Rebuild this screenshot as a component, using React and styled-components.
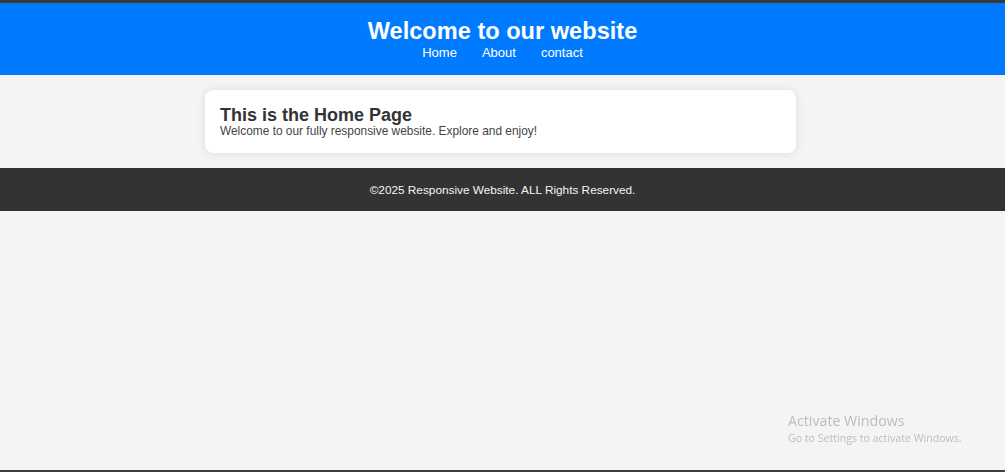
import React from 'react';
import styled, { createGlobalStyle } from 'styled-components';

const GlobalStyle = createGlobalStyle`
  html, body {
    margin: 0;
    padding: 0;
    height: 100%;
  }

  body {
    background-color: #f4f4f4;
    font-family: 'Liberation Sans', Arial, sans-serif;
    color: #333;
  }
`;

const navLinks = ['Home', 'About', 'contact'];

export default function App() {
  return (
    <>
      <GlobalStyle />
      <Styled.TopEdge />
      <Styled.Header>
        <Styled.Title>Welcome to our website</Styled.Title>
        <Styled.Nav>
          {navLinks.map((link) => (
            <Styled.NavLink key={link} href="#">
              {link}
            </Styled.NavLink>
          ))}
        </Styled.Nav>
      </Styled.Header>

      <Styled.Main>
        <Styled.Card>
          <Styled.CardTitle>This is the Home Page</Styled.CardTitle>
          <Styled.CardText>Welcome to our fully responsive website. Explore and enjoy!</Styled.CardText>
        </Styled.Card>
      </Styled.Main>

      <Styled.Footer>©2025 Responsive Website. ALL Rights Reserved.</Styled.Footer>

      <Styled.Watermark>
        <div className="headline">Activate Windows</div>
        <div className="sub">Go to Settings to activate Windows.</div>
      </Styled.Watermark>
      <Styled.BottomEdge />
    </>
  );
}

const Styled = {};

Styled.TopEdge = styled.div`
  height: 3px;
  background-color: #3a3a3a;
`;

Styled.Header = styled.header`
  padding: 14px 0;
  background-color: #007bff;
  color: #ffffff;
  text-align: center;
`;

Styled.Title = styled.h1`
  margin: 0;
  font-size: 23.6px;
  line-height: 28px;
  font-weight: bold;
`;

Styled.Nav = styled.nav`
  display: flex;
  justify-content: center;
  gap: 25px;
`;

Styled.NavLink = styled.a`
  color: #ffffff;
  text-decoration: none;
  font-size: 13px;
  line-height: 16px;
`;

Styled.Main = styled.main`
  padding: 15px 0;
`;

Styled.Card = styled.section`
  width: 591px;
  margin: 0 auto;
  padding: 15px;
  box-sizing: border-box;
  background-color: #ffffff;
  border-radius: 8px;
  box-shadow: 0 0 10px rgba(0, 0, 0, 0.1);
  transform: translateX(-2px);
`;

Styled.CardTitle = styled.h2`
  margin: 0;
  font-size: 18px;
  line-height: 20px;
  color: #333;
`;

Styled.CardText = styled.p`
  margin: 0;
  font-size: 11.9px;
  line-height: 13px;
  color: #444;
`;

Styled.Footer = styled.footer`
  padding: 15px 0 14px;
  background-color: #333333;
  color: #f4f4f4;
  font-size: 11.8px;
  line-height: 14px;
  text-align: center;
`;

Styled.Watermark = styled.div`
  position: fixed;
  left: 788px;
  top: 411px;
  color: rgba(120, 120, 120, 0.45);
  font-family: 'Open Sans', 'Noto Sans', sans-serif;
  pointer-events: none;

  .headline {
    font-size: 14.2px;
    line-height: 20px;
  }

  .sub {
    font-size: 10.6px;
    line-height: 14px;
  }
`;

Styled.BottomEdge = styled.div`
  position: fixed;
  left: 0;
  right: 0;
  bottom: 0;
  height: 2px;
  background-color: #3b3f48;
`;
